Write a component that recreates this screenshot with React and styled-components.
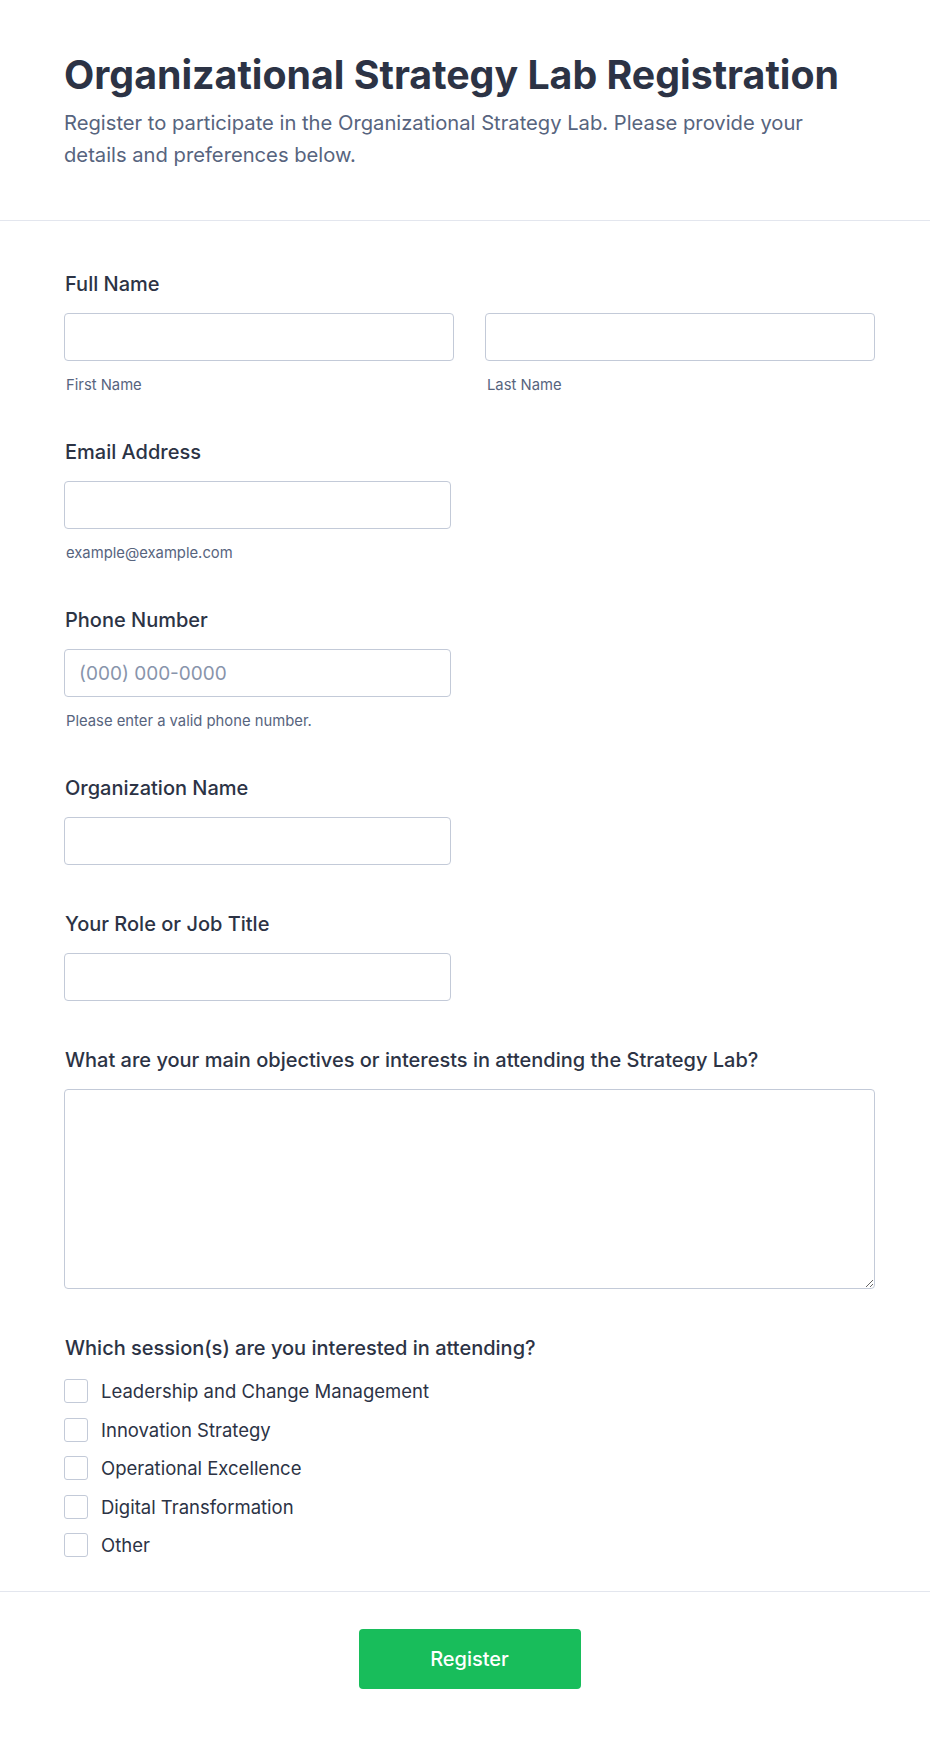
import React from 'react'
import styled, { createGlobalStyle } from 'styled-components'

const GlobalStyle = createGlobalStyle`
  * {
    box-sizing: border-box;
  }
  body {
    margin: 0;
    background: #ffffff;
    font-family: Inter, "Noto Sans", sans-serif;
    color: #2c3345;
  }
`

const Page = styled.div`
  width: 100%;
  min-height: 1739px;
  background: #ffffff;
`
const Header = styled.header`
  padding: 51px 70px 49px 64px;
  border-bottom: 1px solid #e3e6ee;
`
const Title = styled.h1`
  margin: 0;
  font-size: 39.3px;
  line-height: 48px;
  font-weight: 700;
  color: #2c3345;
`
const Subtitle = styled.p`
  margin: 8px 0 0;
  font-size: 20.2px;
  line-height: 32px;
  color: #57647e;
`
const Body = styled.div`
  padding: 51px 55px 34px 64px;
  display: flex;
  flex-direction: column;
  gap: 47px;
`
const Field = styled.div`
  display: flex;
  flex-direction: column;
`
const Label = styled.label`
  display: block;
  font-size: 20px;
  line-height: 24px;
  font-weight: 500;
  color: #2c3345;
  padding-left: 1px;
  margin-bottom: ${(p) => p.$space || 17}px;
`
const Row = styled.div`
  display: flex;
  gap: 31px;
`
const Column = styled.div`
  display: flex;
  flex-direction: column;
  width: ${(p) => p.$width || 387}px;
`
const Input = styled.input`
  width: 100%;
  height: 48px;
  padding: 0 14px;
  border: 1px solid #c3cad8;
  border-radius: 4px;
  font-family: inherit;
  font-size: 19px;
  color: #2c3345;
  background: #ffffff;
  outline: none;

  &::placeholder {
    color: #8894ab;
  }
`
const TextArea = styled.textarea`
  display: block;
  width: 100%;
  height: 200px;
  padding: 12px 14px;
  border: 1px solid #c3cad8;
  border-radius: 4px;
  font-family: inherit;
  font-size: 19px;
  color: #2c3345;
  outline: none;
`
const SubLabel = styled.span`
  display: block;
  margin-top: 16px;
  font-size: 14.8px;
  line-height: 16px;
  color: #57647e;
  padding-left: 2px;
`
const Options = styled.div`
  display: flex;
  flex-direction: column;
  gap: 14.6px;
`
const Option = styled.label`
  display: flex;
  align-items: center;
  gap: 13px;
  font-size: 18.5px;
  line-height: 24px;
  color: #2c3345;
  cursor: pointer;
`
const Box = styled.input`
  appearance: none;
  margin: 0;
  width: 24px;
  height: 24px;
  border: 1px solid #c3cad8;
  border-radius: 3px;
  background: #ffffff;
  cursor: pointer;

  &:checked {
    background: #18bd5b;
    border-color: #18bd5b;
  }
`
const Footer = styled.div`
  border-top: 1px solid #e3e6ee;
  padding: 37px 55px 50px 64px;
  display: flex;
  justify-content: center;
`
const RegisterButton = styled.button`
  width: 222px;
  height: 60px;
  border: none;
  border-radius: 4px;
  background: #18bd5b;
  color: #ffffff;
  font-family: inherit;
  font-size: 20px;
  font-weight: 500;
  cursor: pointer;

  &:hover {
    background: #16aa52;
  }
`

const sessions = [
  'Leadership and Change Management',
  'Innovation Strategy',
  'Operational Excellence',
  'Digital Transformation',
  'Other',
]

const App = () => {
  return (
    <Page>
      <GlobalStyle />
      <Header>
        <Title>Organizational Strategy Lab Registration</Title>
        <Subtitle>
          Register to participate in the Organizational Strategy Lab. Please provide your
          details and preferences below.
        </Subtitle>
      </Header>
      <Body>
        <Field>
          <Label>Full Name</Label>
          <Row>
            <Column $width={390}>
              <Input type="text" />
              <SubLabel>First Name</SubLabel>
            </Column>
            <Column $width={390}>
              <Input type="text" />
              <SubLabel>Last Name</SubLabel>
            </Column>
          </Row>
        </Field>
        <Field>
          <Label>Email Address</Label>
          <Column>
            <Input type="email" />
            <SubLabel>example@example.com</SubLabel>
          </Column>
        </Field>
        <Field>
          <Label>Phone Number</Label>
          <Column>
            <Input type="tel" placeholder="(000) 000-0000" />
            <SubLabel>Please enter a valid phone number.</SubLabel>
          </Column>
        </Field>
        <Field>
          <Label>Organization Name</Label>
          <Column>
            <Input type="text" />
          </Column>
        </Field>
        <Field>
          <Label>Your Role or Job Title</Label>
          <Column>
            <Input type="text" />
          </Column>
        </Field>
        <Field>
          <Label>What are your main objectives or interests in attending the Strategy Lab?</Label>
          <TextArea />
        </Field>
        <Field>
          <Label $space={19}>Which session(s) are you interested in attending?</Label>
          <Options>
            {sessions.map((s) => (
              <Option key={s}>
                <Box type="checkbox" />
                {s}
              </Option>
            ))}
          </Options>
        </Field>
      </Body>
      <Footer>
        <RegisterButton type="button">Register</RegisterButton>
      </Footer>
    </Page>
  )
}

export default App
